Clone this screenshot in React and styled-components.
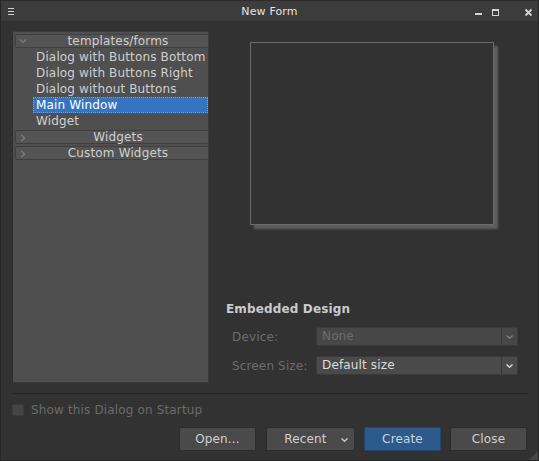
import React from "react";
import styled, { createGlobalStyle } from "styled-components";

const Global = createGlobalStyle`
  html, body { margin: 0; padding: 0; background: #323232; }
  * { box-sizing: border-box; }
`;

const Window = styled.div`
  width: 539px;
  height: 461px;
  background: #323232;
  border: 1px solid #262626;
  border-top: none;
  display: flex;
  flex-direction: column;
  font-family: "DejaVu Sans", "Liberation Sans", sans-serif;
  font-size: 12px;
  letter-spacing: 0.15px;
  color: #d2d2d2;
  position: relative;
  overflow: hidden;
`;

const TitleBar = styled.div`
  height: 21px;
  flex: none;
  background: #3c3c3c;
  border-top: 1px solid #2c2c2c;
  display: flex;
  align-items: center;
  position: relative;
`;

const Title = styled.div`
  flex: 1;
  text-align: center;
  font-size: 11px;
  color: #e4e4e4;
`;

const TitleIcon = styled.svg`
  position: absolute;
  top: 0;
  display: block;
`;

const Content = styled.div`
  flex: 1;
  display: flex;
  flex-direction: column;
  padding: 10px 11px 0 11px;
`;

const MainRow = styled.div`
  height: 352px;
  display: flex;
`;

const Tree = styled.div`
  width: 197px;
  flex: none;
  background: #4f4f4f;
  border: 1px solid #3a3a3a;
  border-left-color: #2e2e2e;
  padding: 2px 0 0 1px;
  display: flex;
  flex-direction: column;
`;

const Header = styled.div`
  height: 14px;
  margin: ${(p) => (p.$first ? "0" : "1px")} 0 1px 1px;
  width: 194px;
  border: 1px solid #3f3f3f;
  border-radius: 2px;
  background: #545454;
  position: relative;
  padding-left: 12px;
  display: flex;
  align-items: center;
  justify-content: center;
  line-height: 12px;
  color: #cfcfcf;
`;

const Chevron = styled.svg`
  position: absolute;
  left: 3px;
  top: 3px;
  display: block;
`;

const Item = styled.div`
  height: 16px;
  margin-left: 19px;
  padding-left: 3px;
  line-height: 16px;
  white-space: nowrap;
  color: ${(p) => (p.$selected ? "#ffffff" : "#cfcfcf")};
  background: ${(p) => (p.$selected ? "#3574c1" : "transparent")};
  outline: ${(p) => (p.$selected ? "1px dotted #d9893a" : "none")};
  outline-offset: -1px;
`;

const RightCol = styled.div`
  flex: 1;
  display: flex;
  flex-direction: column;
  justify-content: space-between;
  padding-bottom: 8px;
`;

const Preview = styled.div`
  margin: 11px 0 0 41px;
  width: 244px;
  height: 183px;
  border: 1px solid #6b6b6b;
  background: #323232;
  box-shadow: 4px 4px 2px #5e5e5e;
`;

const Embedded = styled.div`
  display: flex;
  flex-direction: column;
  padding-left: 17px;
`;

const SectionTitle = styled.div`
  font-weight: bold;
  color: #c9cbcd;
  line-height: 14px;
  margin-bottom: 11px;
`;

const FormRow = styled.div`
  display: flex;
  align-items: center;
  height: 19px;
  margin-bottom: ${(p) => (p.$last ? "0" : "10px")};
  padding-left: 6px;
`;

const Label = styled.div`
  width: 84px;
  color: #6d6d6d;
`;

const Combo = styled.div`
  width: 202px;
  height: 19px;
  background: ${(p) => (p.$disabled ? "#474747" : "#4a4a4a")};
  border: 1px solid #3a3a3a;
  border-radius: 1px;
  display: flex;
  align-items: stretch;
`;

const ComboText = styled.div`
  flex: 1;
  padding-left: 5px;
  line-height: 17px;
  color: ${(p) => (p.$disabled ? "#6c6c6c" : "#dcdcdc")};
`;

const ComboArrow = styled.div`
  width: 16px;
  border-left: 1px solid #383838;
  display: flex;
  align-items: center;
  justify-content: center;
`;

const Separator = styled.div`
  height: 1px;
  background: #252525;
  margin: 10px -2px 0 -1px;
`;

const CheckRow = styled.div`
  display: flex;
  align-items: center;
  margin-top: 10px;
  height: 12px;
  color: #6b6b6b;
`;

const CheckBox = styled.div`
  width: 12px;
  height: 12px;
  border: 1px solid #3c3c3c;
  border-radius: 2px;
  background: #454545;
  margin-right: 7px;
`;

const ButtonRow = styled.div`
  display: flex;
  justify-content: flex-end;
  gap: 9px;
  margin-top: 11px;
`;

const Button = styled.div`
  width: ${(p) => p.$w || 77}px;
  height: 24px;
  border: 1px solid ${(p) => (p.$primary ? "#23466f" : "#2d2d2d")};
  border-radius: 2px;
  background: ${(p) => (p.$primary ? "#2e5a8b" : "#4a4a4a")};
  color: ${(p) => (p.$primary ? "#c6d4e4" : "#d0d0d0")};
  display: flex;
  align-items: center;
  justify-content: center;
  position: relative;
  margin-right: ${(p) => p.$mr || 0}px;
`;

const ButtonLabel = styled.span`
  margin-right: ${(p) => p.$shift || 0}px;
`;

const ButtonArrow = styled.svg`
  position: absolute;
  right: 6px;
  top: 10px;
  display: block;
`;

const Grip = styled.svg`
  position: absolute;
  right: 0;
  bottom: 0;
  display: block;
`;

const SmallDown = ({ color = "#c8c8c8" }) => (
  <svg width="7" height="4" viewBox="0 0 7 4">
    <path d="M0.5 0.5 L3.5 3.2 L6.5 0.5" fill="none" stroke={color} strokeWidth="1.5" />
  </svg>
);

const RightChevron = () => (
  <Chevron width="8" height="8" viewBox="0 0 8 8">
    <path d="M2.5 1 L5.5 4 L2.5 7" fill="none" stroke="#7a7a7a" strokeWidth="1.5" />
  </Chevron>
);

export default function App() {
  return (
    <>
      <Global />
      <Window>
        <TitleBar>
          <TitleIcon width="6" height="20" viewBox="0 0 6 20" style={{ left: 7 }}>
            <rect x="0" y="7" width="6" height="1" fill="#d0d0d0" />
            <rect x="0" y="10" width="6" height="1" fill="#d0d0d0" />
            <rect x="0" y="13" width="6" height="1" fill="#d0d0d0" />
          </TitleIcon>
          <Title>New Form</Title>
          <TitleIcon width="60" height="20" viewBox="0 0 60 20" style={{ left: 473 }}>
            <rect x="1" y="12" width="7" height="2" fill="#d4d4d4" />
            <rect x="18.5" y="8.5" width="6" height="6" fill="none" stroke="#d4d4d4" strokeWidth="1" />
            <rect x="18" y="8" width="7" height="2" fill="#d4d4d4" />
            <path d="M51.5 8.5 L57.5 14.5 M57.5 8.5 L51.5 14.5" stroke="#d4d4d4" strokeWidth="1.8" />
          </TitleIcon>
        </TitleBar>
        <Content>
          <MainRow>
            <Tree>
              <Header $first>
                <Chevron width="8" height="6" viewBox="0 0 8 6">
                  <path d="M1 1.5 L4 4.5 L7 1.5" fill="none" stroke="#7a7a7a" strokeWidth="1.5" />
                </Chevron>
                templates/forms
              </Header>
              <Item>Dialog with Buttons Bottom</Item>
              <Item>Dialog with Buttons Right</Item>
              <Item>Dialog without Buttons</Item>
              <Item $selected>Main Window</Item>
              <Item>Widget</Item>
              <Header>
                <RightChevron />
                Widgets
              </Header>
              <Header>
                <RightChevron />
                Custom Widgets
              </Header>
            </Tree>
            <RightCol>
              <Preview />
              <Embedded>
                <SectionTitle>Embedded Design</SectionTitle>
                <FormRow>
                  <Label>Device:</Label>
                  <Combo $disabled>
                    <ComboText $disabled>None</ComboText>
                    <ComboArrow>
                      <SmallDown color="#7a7a7a" />
                    </ComboArrow>
                  </Combo>
                </FormRow>
                <FormRow $last>
                  <Label>Screen Size:</Label>
                  <Combo>
                    <ComboText>Default size</ComboText>
                    <ComboArrow>
                      <SmallDown color="#d4d4d4" />
                    </ComboArrow>
                  </Combo>
                </FormRow>
              </Embedded>
            </RightCol>
          </MainRow>
          <Separator />
          <CheckRow>
            <CheckBox />
            Show this Dialog on Startup
          </CheckRow>
          <ButtonRow>
            <Button $mr={1}>Open...</Button>
            <Button $w={89}>
              <ButtonLabel $shift={10}>Recent</ButtonLabel>
              <ButtonArrow width="7" height="4" viewBox="0 0 7 4">
                <path d="M0.5 0.5 L3.5 3.2 L6.5 0.5" fill="none" stroke="#c8c8c8" strokeWidth="1.5" />
              </ButtonArrow>
            </Button>
            <Button $primary>Create</Button>
            <Button>Close</Button>
          </ButtonRow>
        </Content>
        <Grip width="9" height="9" viewBox="0 0 9 9">
          <path d="M9 0 L9 9 L0 9 Z" fill="#474747" />
        </Grip>
      </Window>
    </>
  );
}
